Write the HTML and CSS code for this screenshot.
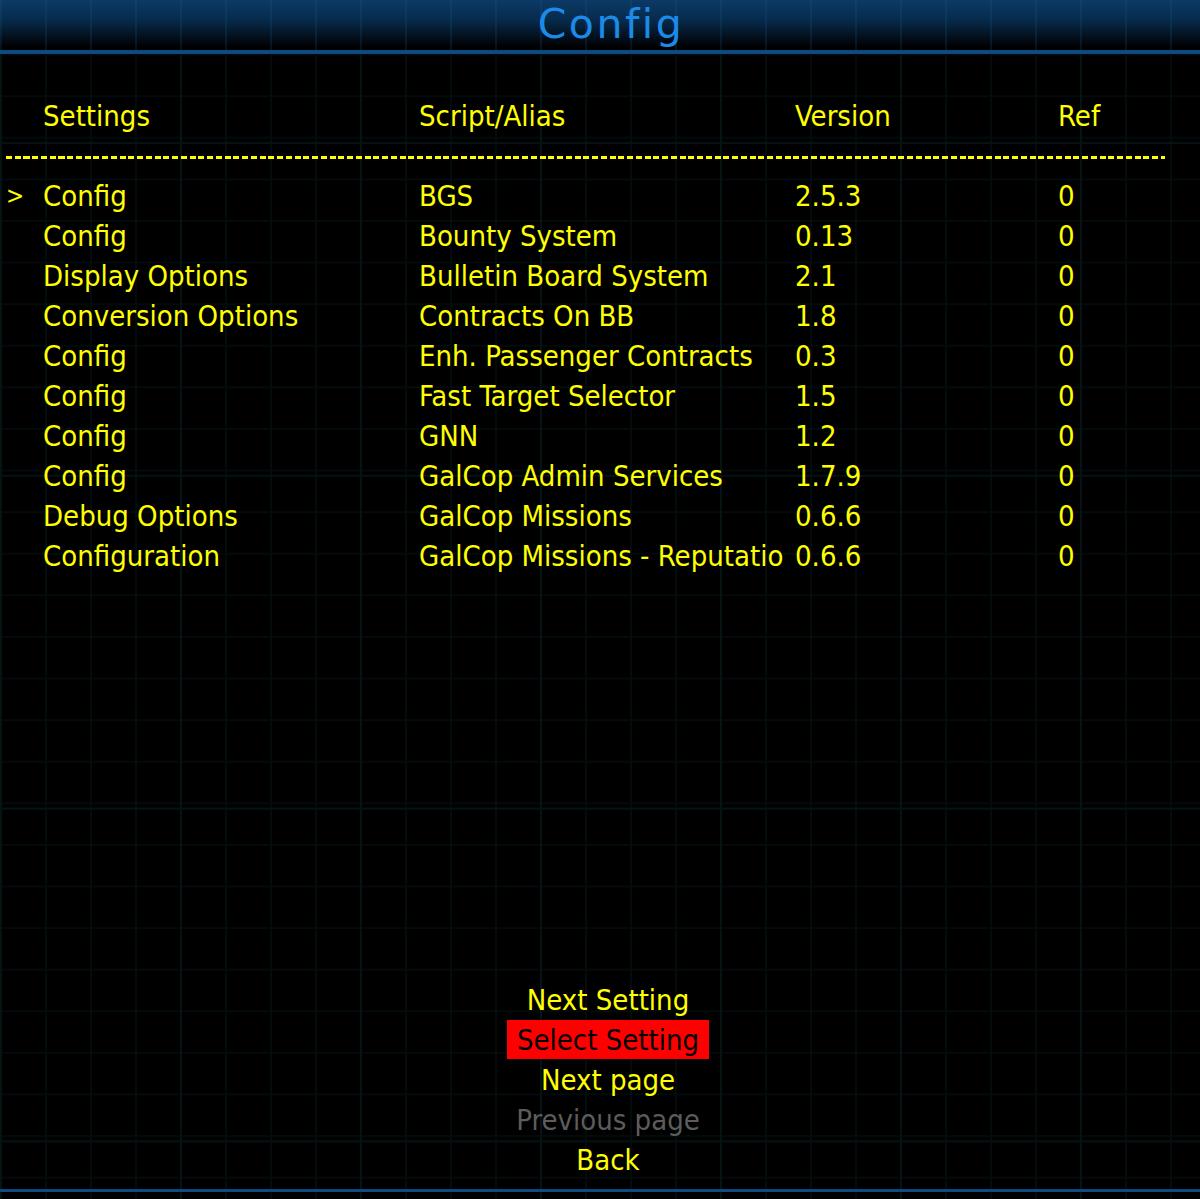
FILE: index.html
```html
<!DOCTYPE html>
<html>
<head>
<meta charset="utf-8">
<link rel="stylesheet" href="styles.css">
</head>
<body>
<div class="screen">
  <header class="title-bar"><h1 class="title">Config</h1></header>
  <section class="table">
    <div class="row head">
      <span class="mark"></span><span>Settings</span><span>Script/Alias</span><span>Version</span><span>Ref</span>
    </div>
    <div class="dashes"></div>
    <div class="row"><span class="mark">&gt;</span><span>Config</span><span>BGS</span><span>2.5.3</span><span>0</span></div>
    <div class="row"><span class="mark"></span><span>Config</span><span>Bounty System</span><span>0.13</span><span>0</span></div>
    <div class="row"><span class="mark"></span><span>Display Options</span><span>Bulletin Board System</span><span>2.1</span><span>0</span></div>
    <div class="row"><span class="mark"></span><span>Conversion Options</span><span>Contracts On BB</span><span>1.8</span><span>0</span></div>
    <div class="row"><span class="mark"></span><span>Config</span><span>Enh. Passenger Contracts</span><span>0.3</span><span>0</span></div>
    <div class="row"><span class="mark"></span><span>Config</span><span>Fast Target Selector</span><span>1.5</span><span>0</span></div>
    <div class="row"><span class="mark"></span><span>Config</span><span>GNN</span><span>1.2</span><span>0</span></div>
    <div class="row"><span class="mark"></span><span>Config</span><span>GalCop Admin Services</span><span>1.7.9</span><span>0</span></div>
    <div class="row"><span class="mark"></span><span>Debug Options</span><span>GalCop Missions</span><span>0.6.6</span><span>0</span></div>
    <div class="row"><span class="mark"></span><span>Configuration</span><span>GalCop Missions - Reputatio</span><span>0.6.6</span><span>0</span></div>
  </section>
  <nav class="menu">
    <div class="item">Next Setting</div>
    <div class="item selected">Select Setting</div>
    <div class="item">Next page</div>
    <div class="item disabled">Previous page</div>
    <div class="item">Back</div>
  </nav>
  <div class="bottom-line"></div>
</div>
</body>
</html>
```
FILE: styles.css
```css
html, body {
  margin: 0;
  padding: 0;
  background: #000;
}
.screen {
  width: 1200px;
  height: 1199px;
  position: relative;
  overflow: hidden;
  display: flex;
  flex-direction: column;
  font-family: "DejaVu Sans Condensed", "DejaVu Sans", sans-serif;
  font-stretch: condensed;
  color: #ffff00;
  background-color: #000;
  background-image:
    linear-gradient(to right, #051315 2px, transparent 2px),
    linear-gradient(to bottom, #051214 2px, transparent 2px),
    linear-gradient(to right, #030b0c 2px, transparent 2px),
    linear-gradient(to bottom, #030a0b 2px, transparent 2px);
  background-size: 180px 100%, 100% 332.8px, 45px 41.6px, 45px 41.6px;
  background-position: 0 0, 0 142px, 0 0, 0 12px;
}
.title-bar {
  height: 50px;
  border-bottom: 4px solid #0d4a82;
  background-image:
    linear-gradient(to right, rgba(30, 90, 140, 0.2) 2px, transparent 2px),
    linear-gradient(to bottom, #0b3a66 0%, #072a4c 40%, #000 95%);
  background-size: 45px 100%, 100% 100%;
  display: flex;
  justify-content: center;
  align-items: flex-start;
}
.title {
  margin: 0;
  font-family: "DejaVu Sans", sans-serif;
  font-stretch: normal;
  font-weight: normal;
  font-size: 41px;
  letter-spacing: 2.5px;
  line-height: normal;
  color: #1a8be8;
  padding-left: 22px;
}
.table {
  margin-top: 42px;
  font-size: 29px;
}
.row {
  display: grid;
  grid-template-columns: 43px 376px 376px 263px 1fr;
  height: 40px;
  line-height: 40px;
  white-space: nowrap;
}
.mark {
  padding-left: 6px;
  font-size: 24px;
}
.dashes {
  height: 40px;
  margin-left: 6px;
  width: 1159px;
  background-image: repeating-linear-gradient(to right, #ffff00 0 6px, transparent 6px 8.75px);
  background-size: 100% 3px;
  background-repeat: no-repeat;
  background-position: 0 20px;
}
.menu {
  margin-top: 404px;
  display: flex;
  flex-direction: column;
  align-items: center;
  font-size: 29px;
  padding-left: 16px;
}
.item {
  height: 40px;
  line-height: 40px;
  padding: 0 10px;
}
.item.selected {
  background: #ff0000;
  color: #000;
  height: 39px;
  margin-bottom: 1px;
}
.item.disabled {
  color: #5c5c5c;
}
.bottom-line {
  margin-top: auto;
  margin-bottom: 7px;
  height: 3px;
  background: #0d4a82;
}
```
